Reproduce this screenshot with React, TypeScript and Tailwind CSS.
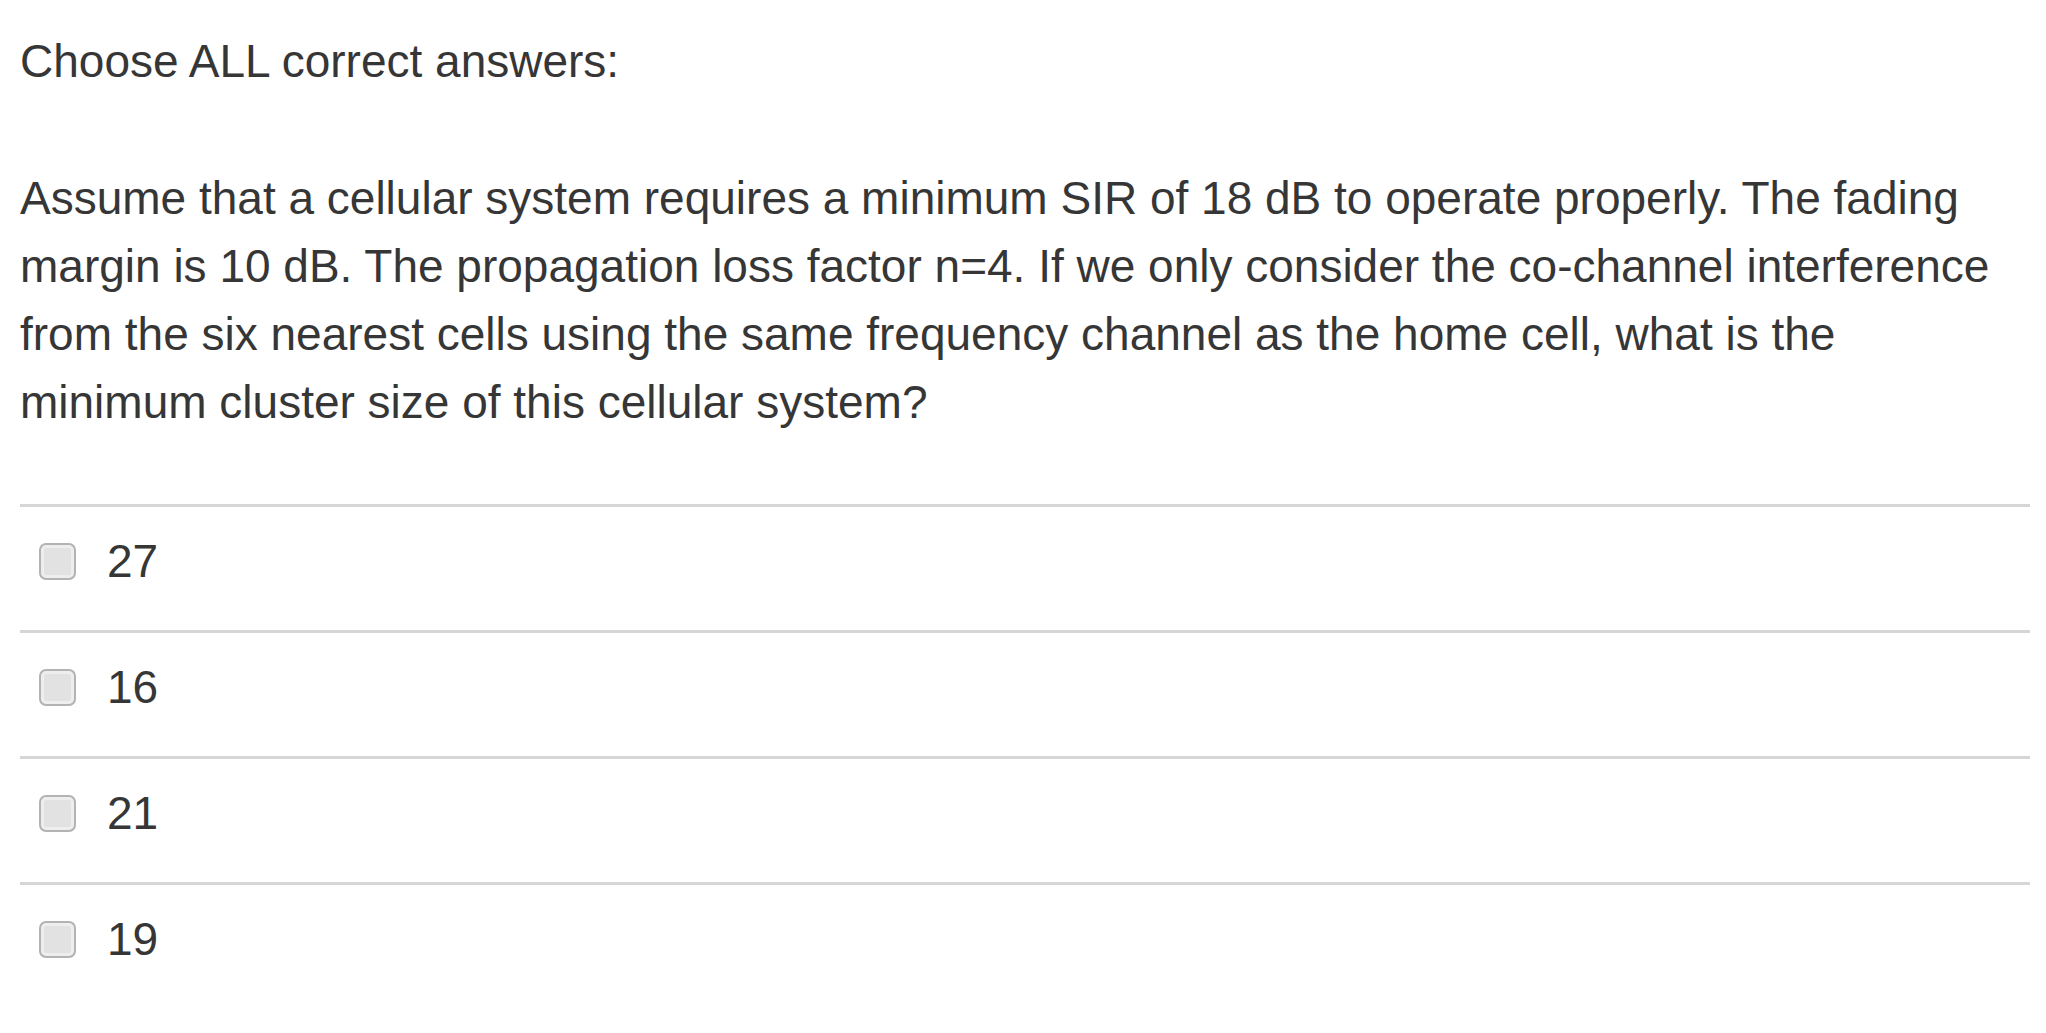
import React from "react";

const options = ["27", "16", "21", "19"];

function Box() {
  return (
    <span className="block w-[37px] h-[37px] shrink-0 rounded-[7px] border-[2px] border-[#b3b3b3] bg-[#e2e2e2] shadow-[inset_0_0_0_3px_#eeeeee]" />
  );
}

export default function App() {
  return (
    <div
      className="w-[2046px] h-[1033px] bg-white text-[#363636] pl-[20px] pr-[16px] pt-[27px] overflow-hidden"
      style={{ fontFamily: '"Liberation Sans", Arial, sans-serif' }}
    >
      <p className="text-[46px] leading-[68px]">Choose ALL correct answers:</p>
      <p className="mt-[69px] text-[46px] leading-[68px] pr-[20px]">
        Assume that a cellular system requires a minimum SIR of 18 dB to operate properly. The fading margin is 10 dB. The propagation loss factor n=4. If we only consider the co-channel interference from the six nearest cells using the same frequency channel as the home cell, what is the minimum cluster size of this cellular system?
      </p>
      <div className="mt-[68px]">
        {options.map((o) => (
          <div
            key={o}
            className="h-[126px] border-t-[3px] border-[#d6d6d6] flex items-start pt-[36px] pl-[19px]"
          >
            <Box />
            <span className="ml-[31px] text-[46px] leading-[37px]">{o}</span>
          </div>
        ))}
      </div>
    </div>
  );
}
